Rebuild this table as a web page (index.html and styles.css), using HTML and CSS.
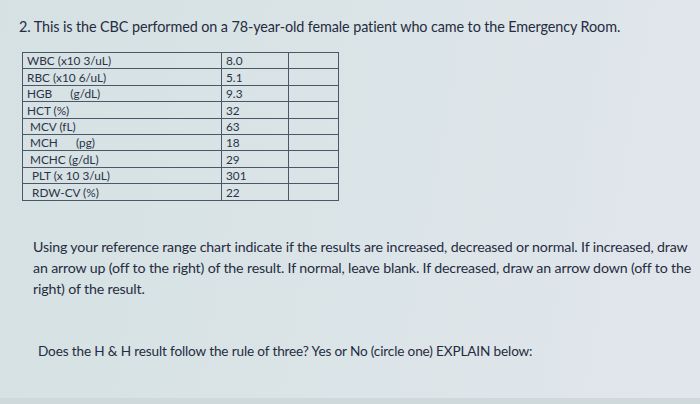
FILE: index.html
```html
<!DOCTYPE html>
<html>
<head>
<meta charset="utf-8">
<link rel="stylesheet" href="styles.css">
</head>
<body>
<div class="page">
  <h1 class="title">2. This is the CBC performed on a 78-year-old female patient who came to the Emergency Room.</h1>
  <table class="cbc">
    <tr><td class="lab">WBC (x10 3/uL)</td><td class="val">8.0</td><td class="mark"></td></tr>
    <tr><td class="lab">RBC (x10 6/uL)</td><td class="val">5.1</td><td class="mark"></td></tr>
    <tr><td class="lab">HGB&nbsp;&nbsp;&nbsp;&nbsp;&nbsp;&nbsp;(g/dL)</td><td class="val">9.3</td><td class="mark"></td></tr>
    <tr><td class="lab">HCT (%)</td><td class="val">32</td><td class="mark"></td></tr>
    <tr><td class="lab in1">MCV (fL)</td><td class="val">63</td><td class="mark"></td></tr>
    <tr><td class="lab in1">MCH&nbsp;&nbsp;&nbsp;&nbsp;&nbsp;&nbsp;(pg)</td><td class="val">18</td><td class="mark"></td></tr>
    <tr><td class="lab in1">MCHC (g/dL)</td><td class="val">29</td><td class="mark"></td></tr>
    <tr><td class="lab in2">PLT (x 10 3/uL)</td><td class="val">301</td><td class="mark"></td></tr>
    <tr><td class="lab in2">RDW-CV (%)</td><td class="val">22</td><td class="mark"></td></tr>
  </table>
  <p class="instr">Using your reference range chart indicate if the results are increased, decreased or normal. If increased, draw an arrow up (off to the right) of the result. If normal, leave blank. If decreased, draw an arrow down (off to the right) of the result.</p>
  <p class="question">Does the H &amp; H result follow the rule of three? Yes or No (circle one) EXPLAIN below:</p>
</div>
</body>
</html>
```
FILE: styles.css
```css
html, body {
  margin: 0;
  padding: 0;
}
body {
  width: 700px;
  height: 404px;
  overflow: hidden;
  font-family: Lato, "Open Sans", sans-serif;
  color: #262c40;
  background: linear-gradient(100deg, #d5e1e3 0%, #dae4e7 45%, #e1e6ec 100%);
}
.page {
  padding: 17px 0 0 19px;
  box-sizing: border-box;
  border-bottom: 6px solid #cfd9dc;
  height: 404px;
}
.title {
  margin: 0;
  font-size: 14.4px;
  font-weight: 400;
  line-height: 20px;
  letter-spacing: -0.1px;
}
.cbc {
  margin: 15px 0 0 3px;
  border-collapse: collapse;
  font-size: 11.8px;
  color: #2c3248;
}
.cbc td {
  border: 1px solid #4c5669;
  height: 15.4px;
  padding: 0 0 0 4px;
  line-height: 14px;
  vertical-align: bottom;
}
.lab { width: 194px; }
.lab.in1 { padding-left: 7px; width: 191px; }
.lab.in2 { padding-left: 9px; width: 189px; }
.val { width: 62px; }
.mark { width: 45px; }
.instr {
  margin: 35px 0 0 14px;
  width: 660px;
  font-size: 14.2px;
  line-height: 21px;
  letter-spacing: -0.15px;
}
.question {
  margin: 44px 0 0 19px;
  font-size: 13.6px;
  letter-spacing: -0.15px;
}
```
